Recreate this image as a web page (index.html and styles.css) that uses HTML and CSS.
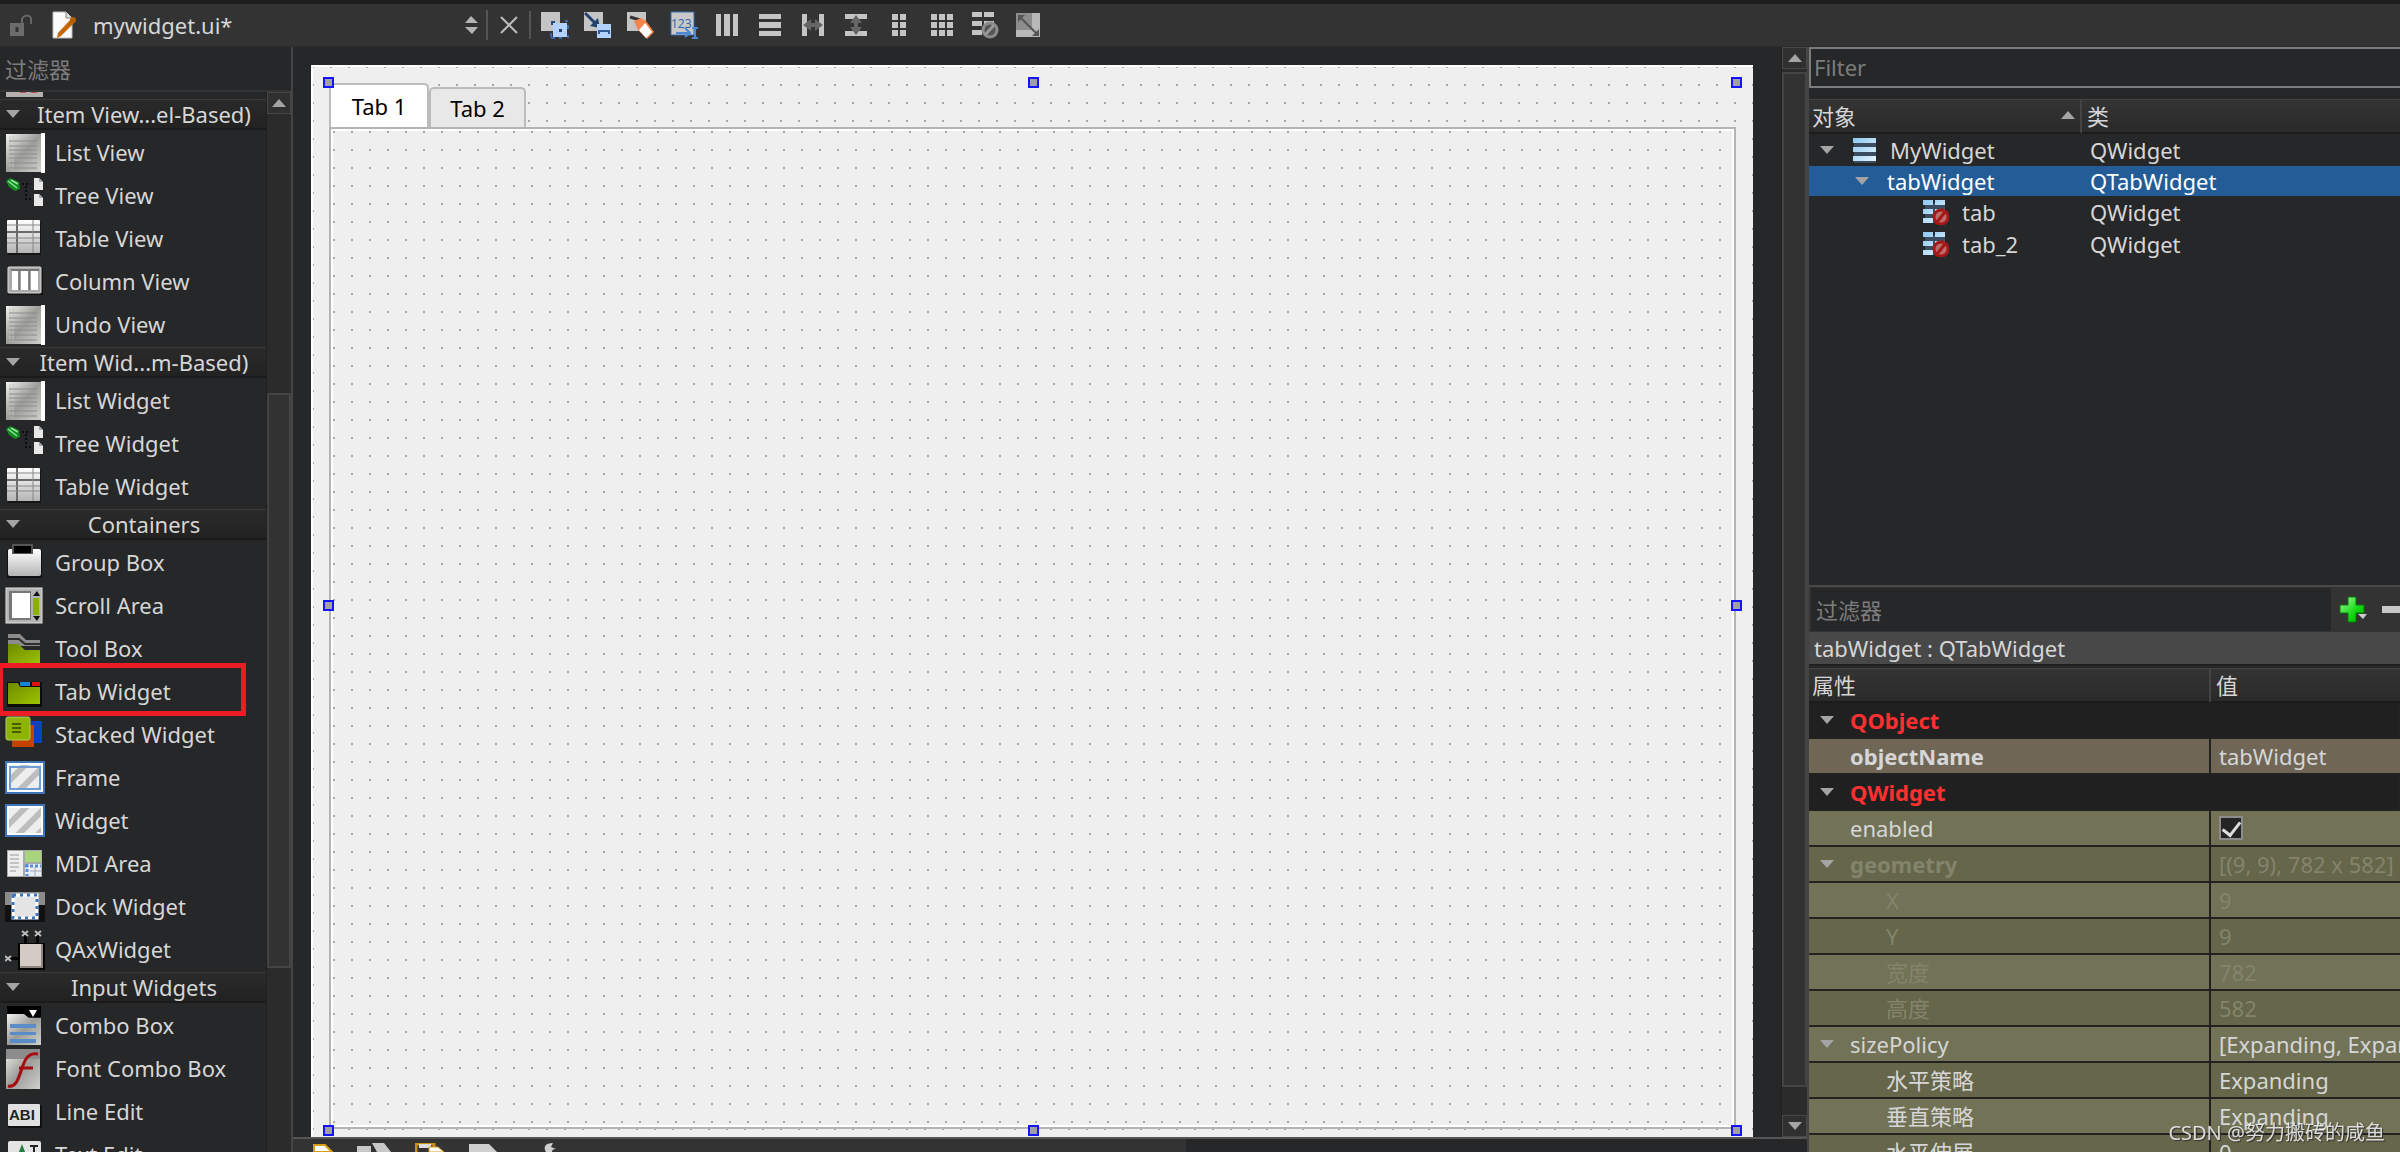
FILE: index.html
```
<!DOCTYPE html>
<html lang="zh-CN">
<head>
	<meta charset="utf-8">
	<title>mywidget.ui - Designer</title>
	<link rel="stylesheet" href="styles.css">
</head>

<body>
	<!-- icons used more than once -->
	<svg class="defs" aria-hidden="true">
		<defs>
			<linearGradient id="silver" x1="0" y1="0" x2="1" y2="1">
				<stop offset="0" stop-color="#f2f2f0"/>
				<stop offset=".5" stop-color="#9c9c98"/>
				<stop offset="1" stop-color="#d0d0cc"/>
			</linearGradient>
			<linearGradient id="paper" x1="0" y1="0" x2="0" y2="1">
				<stop offset="0" stop-color="#fff"/>
				<stop offset="1" stop-color="#b4b4b4"/>
			</linearGradient>
			<linearGradient id="lime" x1="0" y1="0" x2="1" y2="1">
				<stop offset="0" stop-color="#6f8a00"/>
				<stop offset="1" stop-color="#9cc400"/>
			</linearGradient>
			<linearGradient id="ice" x1="0" y1="0" x2="1" y2="1">
				<stop offset="0" stop-color="#8cc8f0"/>
				<stop offset="1" stop-color="#e4f4ff"/>
			</linearGradient>
			<linearGradient id="plus" x1="0" y1="0" x2="1" y2="1">
				<stop offset="0" stop-color="#a8f8a0"/>
				<stop offset=".6" stop-color="#10d810"/>
				<stop offset="1" stop-color="#00b000"/>
			</linearGradient>
			<pattern id="stripes" width="14" height="14" patternUnits="userSpaceOnUse" patternTransform="rotate(45)">
				<rect width="14" height="14" fill="#eee"/>
				<rect width="6" height="14" fill="#bdbdbd"/>
			</pattern>
		</defs>
		<symbol id="i-list" viewBox="0 0 40 40">
			<rect x="1" y="1" width="35" height="38" fill="url(#silver)"/>
			<path d="M5 3v34M8 3v34" stroke="#c8c8c4"/>
			<path d="M4 8h28M4 13h28M4 17h28M4 21h28M4 25h28M4 30h28M4 35h28" stroke="#8c8c88"/>
			<rect x="36" width="4" height="40" fill="#fff"/>
		</symbol>
		<symbol id="i-tree" viewBox="0 0 40 40">
			<path d="M1 5l4-3 9 4 1 7-5 2-6-4z" fill="#158a22"/>
			<path d="M3 5l9 7M6 4l7 4" stroke="#8fe69a" stroke-width="1.5" fill="none"/>
			<path d="M17 8h9M21 10v13h6" stroke="#0c0c0c" stroke-width="2" stroke-dasharray="2 2" fill="none"/>
			<path d="M29 2h5l4 4v8h-9zM29 18h5l4 4v8h-9z" fill="#e8e8e8"/>
			<path d="M34 2v4h4zM34 18v4h4z" fill="#aaa"/>
		</symbol>
		<symbol id="i-table" viewBox="0 0 40 40">
			<rect x="3" y="3" width="33" height="33" rx="1" fill="#151515"/>
			<rect x="2" y="1" width="33" height="33" rx="1" fill="url(#paper)"/>
			<path d="M2 13h33M12 1v33" stroke="#6a6a6a" stroke-width="2"/>
			<path d="M2 6h33M2 19h33M2 24h33M28 1v33" stroke="#888"/>
		</symbol>
		<symbol id="i-column" viewBox="0 0 40 40">
			<rect x="3" y="6" width="35" height="27" fill="#111"/>
			<rect x="3" y="5" width="33" height="26" rx="1" fill="#aaa" stroke="#ddd"/>
			<path d="M7 9h7v19H7zM16 9h8v19h-8zM26 9h7v19h-7z" fill="#fff"/>
			<path d="M14 9v19M24 9v19M6 8h28" stroke="#666" stroke-width="1.5"/>
		</symbol>
		<symbol id="i-layout" viewBox="0 0 26 26">
			<path d="M2 4h20v20H2z" fill="#3c4c62"/>
			<path d="M0 1h10v5H0zM12 1h10v5H12zM0 10h10v5H0zM12 10h10v5H12zM0 19h10v5H0z" fill="url(#ice)"/>
			<circle cx="18" cy="18" r="7" fill="#b86c6c" stroke="#a81818" stroke-width="3"/>
			<path d="M14 23l8-10" stroke="#a81818" stroke-width="3"/>
		</symbol>
		<symbol id="i-stripes" viewBox="0 0 40 34">
			<rect x="1" y="1" width="38" height="31" fill="#fff" stroke="#3f74b8" stroke-width="2"/>
			<rect x="4" y="4" width="32" height="25" fill="url(#stripes)"/>
		</symbol>
		<symbol id="i-down" viewBox="0 0 14 8"><path d="M0 0h14L7 8z" fill="#a4a4a4"/></symbol>
		<symbol id="i-up" viewBox="0 0 14 8"><path d="M0 8h14L7 0z" fill="#a4a4a4"/></symbol>
	</svg>

	<header class="toolbar">
		<button class="lock" title="Lock"><svg width="24" height="26" viewBox="0 0 24 26">
			<path d="M13 11V7a5 5 0 0 1 9-1v6" fill="none" stroke="#666" stroke-width="2"/>
			<rect x="1" y="11" width="14" height="13" fill="#6c6c6c"/>
			<path d="M8 15v5" stroke="#333" stroke-width="3"/></svg></button>
		<label class="file" for="file"><svg width="26" height="28" viewBox="0 0 26 28">
			<path d="M1 1h13l6 6v20H1z" fill="#fafafa" stroke="#bbb"/>
			<path d="M14 1v6h6" fill="#ddd" stroke="#888"/>
			<path d="M5 27l1-5L19 8l4 3L9 25z" fill="#c4660a"/>
			<circle cx="21" cy="9" r="3" fill="#b85c00"/></svg></label>
		<div class="file-picker">
			<select id="file" class="file-select"><option>mywidget.ui*</option></select>
			<svg class="spin" width="13" height="18" viewBox="0 0 13 18"><path d="M0 7h13L6 0zM0 11h13l-6 7z" fill="#b4b4b4"/></svg>
		</div>
		<button class="close" title="Close"><svg width="18" height="18" viewBox="0 0 18 18"><path d="M1 1l16 16M17 1L1 17" stroke="#bcbcbc" stroke-width="2"/></svg></button>
		<div class="tools">
			<button title="Edit Widgets"><svg width="28" height="28" viewBox="0 0 28 28"><path d="M0 1h19v19H0z" fill="#c4c4c4"/><path d="M10 10h4v4h-4z" fill="#274a78"/><path d="M10 26v-4M10 27h4M18 27h3M27 27v-3M27 10h-3M27 14v4" stroke="#3a68b0" stroke-width="2"/><path d="M12 12h14v14H12z" fill="#b4d2ff"/><path d="M18 18h3v3h-3z" fill="#24406c"/></svg></button>
			<button title="Edit Signals/Slots"><svg width="28" height="28" viewBox="0 0 28 28"><path d="M0 1h19v19H0z" fill="#c4c4c4"/><path d="M1 2l11 11" stroke="#24406c" stroke-width="3"/><path d="M16 17l-10-2 8-8z" fill="#24406c"/><path d="M13 13h14v14H13z" fill="#b4d2ff"/><path d="M15 20h10M15 23v-4M25 23v-4" stroke="#355e98" stroke-width="2"/></svg></button>
			<button title="Edit Buddies"><svg width="28" height="28" viewBox="0 0 28 28"><path d="M0 1h19v19H0z" fill="#c4c4c4"/><path d="M3 6l10 3" stroke="#333" stroke-width="3"/><path d="M7 10l7-3 5 3 8 11-7 7-9-9z" fill="#f5844c"/><path d="M12 19l6-7 7 9-6 6z" fill="#fff"/></svg></button>
			<button title="Edit Tab Order"><svg width="28" height="28" viewBox="0 0 28 28"><path d="M1 1h23v23H1z" fill="#c8c8c8" stroke="#386cb0"/><text class="tab-order" x="1" y="17">123</text><path d="M6 22h14M15 17l5 5-5 4M25 17v10M28 17h-6M28 27h-6" stroke="#4a88d8" stroke-width="2" fill="none"/></svg></button>
			<button title="Lay Out Horizontally"><svg width="24" height="24" viewBox="0 0 24 24"><path d="M1 1h5v22H1zM9 1h6v22H9zM18 1h5v22h-5z" fill="#c4c4c4"/></svg></button>
			<button title="Lay Out Vertically"><svg width="24" height="24" viewBox="0 0 24 24"><path d="M1 1h22v5H1zM1 9h22v6H1zM1 18h22v5H1z" fill="#c4c4c4"/></svg></button>
			<button title="Lay Out Horizontally in Splitter"><svg width="24" height="24" viewBox="0 0 24 24"><path d="M1 1h5v22H1zM18 1h5v22h-5z" fill="#c4c4c4"/><path d="M6 12h12" stroke="#666" stroke-width="4"/><path d="M2 12l8-6v12zM22 12l-8-6v12z" fill="#666"/></svg></button>
			<button title="Lay Out Vertically in Splitter"><svg width="24" height="24" viewBox="0 0 24 24"><path d="M1 1h22v5H1zM1 18h22v5H1z" fill="#c4c4c4"/><path d="M12 6v12" stroke="#666" stroke-width="4"/><path d="M12 2l-6 8h12zM12 22l-6-8h12z" fill="#666"/></svg></button>
			<button title="Lay Out in a Form"><svg width="24" height="24" viewBox="0 0 24 24"><path d="M5 1h6v6H5zM13 1h6v6h-6zM5 9h6v6H5zM13 9h6v6h-6zM5 17h6v6H5zM13 17h6v6h-6z" fill="#c4c4c4"/></svg></button>
			<button title="Lay Out in a Grid"><svg width="24" height="24" viewBox="0 0 24 24"><path d="M1 1h6v6H1zM9 1h6v6H9zM17 1h6v6h-6zM1 9h6v6H1zM9 9h6v6H9zM17 9h6v6h-6zM1 17h6v6H1zM9 17h6v6H9zM17 17h6v6h-6z" fill="#c4c4c4"/></svg></button>
			<button title="Break Layout"><svg width="28" height="28" viewBox="0 0 28 28"><path d="M1 1h10v5H1zM13 1h10v5H13zM1 10h10v5H1zM13 10h10v5H13zM1 19h10v5H1z" fill="#c4c4c4"/><circle cx="19" cy="19" r="7" fill="#555" stroke="#8c8c8c" stroke-width="3"/><path d="M14 24l9-10" stroke="#999" stroke-width="3"/></svg></button>
			<button title="Adjust Size"><svg width="26" height="26" viewBox="0 0 26 26"><path d="M1 1h24v24H1z" fill="#b8b8b8"/><path d="M1 1h16v17H1z" fill="#8c8c8c"/><path d="M6 6l15 15" stroke="#555" stroke-width="2"/><path d="M3 3h7l-7 7zM24 24h-7l7-7z" fill="#555"/></svg></button>
		</div>
	</header>

	<main class="workspace">
		<aside class="widget-box">
			<input class="filter" type="text" placeholder="过滤器" aria-label="过滤器">
			<div class="box-body">
				<div class="box-list">
					<svg class="cut-icon" width="40" height="7" viewBox="0 0 40 7"><path d="M1 0h37v5H1z" fill="#b4b0b0"/><path d="M15 0h6v1h-6zM26 0h6v1h-6z" fill="#c05060"/></svg>

					<button class="category"><svg><use href="#i-down"/></svg><span>Item View...el-Based)</span></button>
					<ul>
						<li><svg><use href="#i-list"/></svg>List View</li>
						<li><svg><use href="#i-tree"/></svg>Tree View</li>
						<li><svg><use href="#i-table"/></svg>Table View</li>
						<li><svg><use href="#i-column"/></svg>Column View</li>
						<li><svg><use href="#i-list"/></svg>Undo View</li>
					</ul>

					<button class="category"><svg><use href="#i-down"/></svg><span>Item Wid...m-Based)</span></button>
					<ul>
						<li><svg><use href="#i-list"/></svg>List Widget</li>
						<li><svg><use href="#i-tree"/></svg>Tree Widget</li>
						<li><svg><use href="#i-table"/></svg>Table Widget</li>
					</ul>

					<button class="category"><svg><use href="#i-down"/></svg><span>Containers</span></button>
					<ul>
						<li><svg viewBox="0 0 40 40"><path d="M2 7h35v28H2z" fill="#111"/><rect x="3" y="6" width="33" height="27" rx="2" fill="url(#paper)"/><path d="M7 1h21v10H7z" fill="#555"/><path d="M9 3h17v7H9z" fill="#000"/></svg>Group Box</li>
						<li><svg viewBox="0 0 40 40"><rect x="1" y="2" width="36" height="35" fill="#b4b4b4" stroke="#e4e4e4"/><path d="M4 5h22v29H4z" fill="#777"/><path d="M7 7h18v25H7z" fill="#fff"/><path d="M28 12h6v17h-6z" fill="#8cb000"/><path d="M28 10h7l-3-5zM28 30h7l-3 5z" fill="#111"/></svg>Scroll Area</li>
						<li><svg viewBox="0 0 40 40"><path d="M3 5h12l6 6h14v6H3z" fill="#8c8c8c"/><path d="M3 10h11l6 5h15" stroke="#2c2c2c" stroke-width="2" fill="none"/><path d="M3 15h10l7 6h15v15H3z" fill="url(#lime)"/></svg>Tool Box</li>
						<li class="marked"><svg viewBox="0 0 40 40"><path d="M2 10h35v25H2z" fill="#0c0c0c"/><path d="M3 11h10l2 4h20v17H3z" fill="url(#lime)"/><path d="M15 10h10v4H15z" fill="#1484d8"/><path d="M27 10h8v4h-8z" fill="#e01010"/></svg>Tab Widget</li>
						<li><svg viewBox="0 0 40 40"><path d="M26 6h11v22H26z" fill="#0a40c4"/><path d="M7 10h22v22H7z" fill="#c44200"/><rect x="1" y="2" width="24" height="23" rx="2" fill="#8cb400" stroke="#b4c86c"/><path d="M7 9h9M7 13h9M7 17h9" stroke="#446000" stroke-width="2"/></svg>Stacked Widget</li>
						<li><svg><use href="#i-stripes"/><rect x="5" y="9" width="30" height="22" fill="none" stroke="#6f9cd4" stroke-width="2"/></svg>Frame</li>
						<li><svg><use href="#i-stripes"/></svg>Widget</li>
						<li><svg viewBox="0 0 40 40"><path d="M2 6h35v27H2z" fill="#aaa"/><path d="M3 7h15v25H3z" fill="#eee"/><path d="M5 11h9M5 15h9M5 19h9M5 23h9M5 27h6" stroke="#999"/><path d="M20 7h16v11H20z" fill="#a8d47c"/><path d="M20 20h16v12H20z" fill="#e8eef8"/><path d="M20 22h16M22 20v12" stroke="#5a8cd8" stroke-width="3" stroke-dasharray="3 2"/><path d="M25 27h11M30 23v9" stroke="#aaa"/></svg>MDI Area</li>
						<li><svg viewBox="0 0 40 40"><path d="M0 5h40v13H0z" fill="#8c8c8c"/><path d="M0 18h40v17H0z" fill="#111"/><rect x="8" y="8" width="24" height="23" fill="#e4e4e4" stroke="#fff" stroke-width="3"/><rect x="8" y="8" width="24" height="23" fill="none" stroke="#3c74b8" stroke-width="3" stroke-dasharray="3 4"/></svg>Dock Widget</li>
						<li><svg viewBox="0 0 40 40"><path d="M13 13h27v27H13zM19 4h3v9h-3zM31 4h3v9h-3zM4 27h10v3H4z" fill="#050505"/><path d="M15 14h22v23H15z" fill="#d4ccc4"/><path d="M37 14v23H15" stroke="#8c8880" stroke-width="2" fill="none"/><path d="M17 1l6 5M23 1l-6 5M30 1l6 5M36 1l-6 5M0 26l6 5M6 26l-6 5" stroke="#bbb" stroke-width="2"/></svg>QAxWidget</li>
					</ul>

					<button class="category"><svg><use href="#i-down"/></svg><span>Input Widgets</span></button>
					<ul>
						<li><svg viewBox="0 0 40 40"><path d="M2 0h34v11H2z" fill="#000"/><path d="M2 8h17l5 4h12v27H2z" fill="url(#silver)"/><path d="M24 4h8l-4 7z" fill="#fff"/><path d="M5 18h26v4H5zM5 26h26v3H5zM5 33h26v4H5z" fill="#5c8cc8"/></svg>Combo Box</li>
						<li><svg viewBox="0 0 40 40"><path d="M1 0h34v40H1z" fill="url(#silver)"/><path d="M1 0h34v10H1z" fill="#8c8c8c"/><path d="M3 37c11 3 12-18 18-27 3-5 7-6 12-5M14 19h14" stroke="#a40c10" stroke-width="3" fill="none"/></svg>Font Combo Box</li>
						<li><svg viewBox="0 0 40 40"><rect x="3" y="13" width="34" height="23" fill="#111"/><rect x="3" y="12" width="32" height="22" rx="1" fill="#e0e0e0"/><text class="glyph" x="4" y="28">ABI</text></svg>Line Edit</li>
						<li><svg viewBox="0 0 40 40"><rect x="3" y="6" width="33" height="34" rx="2" fill="#e4e4e4"/><path d="M12 22l5-13 5 13z" fill="#208040"/><path d="M25 11h8M29 11v12" stroke="#222" stroke-width="2"/></svg>Text Edit</li>
					</ul>
				</div>
				<div class="scrollbar">
					<button class="step" title="Up"><svg><use href="#i-up"/></svg></button>
					<div class="track-head"></div>
					<div class="thumb"></div>
					<div class="track-tail"></div>
				</div>
			</div>
		</aside>

		<section class="center">
			<div class="canvas">
				<div class="form">
					<div class="tab-widget">
						<div class="tabs" role="tablist">
							<button class="tab active" role="tab">Tab 1</button>
							<button class="tab" role="tab">Tab 2</button>
						</div>
						<div class="page"></div>
						<i class="handle n w"></i><i class="handle n c"></i><i class="handle n e"></i>
						<i class="handle m w"></i><i class="handle m e"></i>
						<i class="handle s w"></i><i class="handle s c"></i><i class="handle s e"></i>
					</div>
				</div>
				<div class="scrollbar">
					<button class="step" title="Up"><svg><use href="#i-up"/></svg></button>
					<div class="thumb"></div>
					<div class="track-end"></div>
					<button class="step" title="Down"><svg><use href="#i-down"/></svg></button>
				</div>
			</div>
			<div class="action-bar">
				<div class="actions">
					<button title="New"><svg width="20" height="9" viewBox="0 0 20 9"><path d="M1 2h11l7 7H1z" fill="#fff" stroke="#d89c18" stroke-width="2"/></svg></button>
					<button title="Copy"><svg width="34" height="9" viewBox="0 0 34 9"><path d="M0 3h14v6H0zM15 0h12l7 9H20z" fill="#c8c8c8"/></svg></button>
					<button title="Paste"><svg width="30" height="9" viewBox="0 0 30 9"><path d="M1 9V1h18v4" fill="none" stroke="#c89018" stroke-width="3"/><path d="M4 1h12v4H4z" fill="#ddd"/><path d="M14 9V4h9l6 5z" fill="#fff" stroke="#d89c18"/></svg></button>
					<button title="Delete"><svg width="28" height="9" viewBox="0 0 28 9"><path d="M0 1h20l8 8H0z" fill="#d0d0d0"/></svg></button>
					<button title="Configure"><svg width="14" height="9" viewBox="0 0 14 9"><path d="M10 0C2 0 0 4 3 9h6c0-2 1-3 4-3L8 4z" fill="#d0d0d0"/></svg></button>
				</div>
			</div>
		</section>

		<aside class="inspector">
			<section class="objects">
				<input class="object-filter" type="text" placeholder="Filter" aria-label="Filter">
				<table class="tree">
					<thead>
						<tr><th class="name">对象<svg class="sort"><use href="#i-up"/></svg></th><th>类</th></tr>
					</thead>
					<tbody>
						<tr><td><div class="cell"><svg class="arrow"><use href="#i-down"/></svg><svg class="icon" viewBox="0 0 26 26"><path d="M1 4h22v22H1z" fill="#3c4c62"/><path d="M0 1h23v5H0zM0 10h23v5H0zM0 19h23v5H0z" fill="url(#ice)"/></svg>MyWidget</div></td><td>QWidget</td></tr>
						<tr class="selected"><td><div class="cell level-1"><svg class="arrow"><use href="#i-down"/></svg>tabWidget</div></td><td>QTabWidget</td></tr>
						<tr><td><div class="cell level-2"><svg class="icon"><use href="#i-layout"/></svg>tab</div></td><td>QWidget</td></tr>
						<tr><td><div class="cell level-2"><svg class="icon"><use href="#i-layout"/></svg>tab_2</div></td><td>QWidget</td></tr>
					</tbody>
				</table>
			</section>

			<section class="properties">
				<div class="property-bar">
					<input class="filter" type="text" placeholder="过滤器" aria-label="过滤器">
					<button title="Add"><svg width="28" height="28" viewBox="0 0 28 28"><path d="M9 1h8v8h8v8h-8v9H9v-9H1V9h8z" fill="url(#plus)" stroke="#087808"/><path d="M19 18h9l-4 5z" fill="#ccc"/></svg></button>
					<button title="Remove"><svg width="28" height="28" viewBox="0 0 28 28"><path d="M1 10h26v7H1z" fill="#c8c8c8"/></svg></button>
				</div>
				<div class="object-label">tabWidget : QTabWidget</div>
				<table class="props">
					<thead>
						<tr><th class="name">属性</th><th>值</th></tr>
					</thead>
					<tbody>
						<tr class="group"><td colspan="2"><div class="cell"><svg class="arrow"><use href="#i-down"/></svg>QObject</div></td></tr>
						<tr class="brown"><td><div class="cell"><b>objectName</b></div></td><td>tabWidget</td></tr>
						<tr class="group"><td colspan="2"><div class="cell"><svg class="arrow"><use href="#i-down"/></svg>QWidget</div></td></tr>
						<tr class="light"><td><div class="cell"><label for="enabled">enabled</label></div></td><td><input id="enabled" class="check" type="checkbox" checked></td></tr>
						<tr class="dark off"><td><div class="cell"><svg class="arrow"><use href="#i-down"/></svg><b>geometry</b></div></td><td>[(9, 9), 782 x 582]</td></tr>
						<tr class="light off"><td><div class="cell sub">X</div></td><td>9</td></tr>
						<tr class="dark off"><td><div class="cell sub">Y</div></td><td>9</td></tr>
						<tr class="light off"><td><div class="cell sub">宽度</div></td><td>782</td></tr>
						<tr class="dark off"><td><div class="cell sub">高度</div></td><td>582</td></tr>
						<tr class="light"><td><div class="cell"><svg class="arrow"><use href="#i-down"/></svg>sizePolicy</div></td><td>[Expanding, Expanding, 0, 0]</td></tr>
						<tr class="dark"><td><div class="cell sub">水平策略</div></td><td>Expanding</td></tr>
						<tr class="light"><td><div class="cell sub">垂直策略</div></td><td>Expanding</td></tr>
						<tr class="dark"><td><div class="cell sub">水平伸展</div></td><td>0</td></tr>
					</tbody>
				</table>
			</section>
		</aside>
	</main>
	<div class="watermark">CSDN @努力搬砖的咸鱼</div>
</body>

</html>
```
FILE: styles.css
```
* {
	box-sizing: border-box;
}

body {
	margin: 0;
	height: 100vh;
	display: flex;
	flex-direction: column;
	overflow: hidden;
	background: #262729;
	color: #d6d6d6;
	font: 22px/30px "Noto Sans", "Noto Sans CJK SC", sans-serif;
}

button, input, select {
	font: inherit;
	color: inherit;
	margin: 0;
	padding: 0;
	border: 0;
	border-radius: 0;
	background: none;
}

input {
	outline: none;
}

input::placeholder {
	color: #7c7c7c;
	opacity: 1;
}

ul {
	margin: 0;
	padding: 0 0 2px;
	list-style: none;
}

svg {
	display: block;
	flex: none;
}

.defs {
	position: absolute;
	width: 0;
	height: 0;
}

/* toolbar */
.toolbar {
	flex: none;
	height: 47px;
	display: flex;
	align-items: center;
	background: #333;
	border-top: 4px solid #1e1e1e;
	border-bottom: 1px solid #2c2c2c;
}

.lock {
	padding-left: 9px;
}

.file {
	padding-left: 19px;
}

.file-picker {
	display: flex;
	align-items: center;
	width: 410px;
	padding: 0 8px 0 15px;
	border-right: 2px solid #555;
}

.file-select {
	flex: 1;
	appearance: none;
	outline: none;
}

.close {
	width: 43px;
	height: 28px;
	padding-left: 12px;
	border-right: 2px solid #555;
}

.tools {
	display: flex;
	padding-left: 2px;
}

.tools button {
	width: 43px;
	display: flex;
	align-items: center;
	justify-content: center;
}

.tab-order {
	font: 12px "Open Sans", sans-serif;
	fill: #2464b4;
}

.glyph {
	font: bold 15px "Liberation Sans", sans-serif;
	fill: #222;
}

.workspace {
	flex: 1;
	min-height: 0;
	display: flex;
}

/* widget box */
.widget-box {
	width: 293px;
	flex: none;
	display: flex;
	flex-direction: column;
	border-right: 2px solid #444;
}

.filter {
	height: 43px;
	padding-left: 5px;
	background: #262729;
}

.box-body {
	flex: 1;
	min-height: 0;
	display: flex;
	border-top: 2px solid #333;
}

.box-list {
	flex: 1;
	overflow: hidden;
}

.cut-icon {
	margin-left: 5px;
}

.category {
	display: flex;
	align-items: center;
	width: 100%;
	height: 31px;
	background: linear-gradient(#2a2a2a, #222);
	border-top: 1px solid #3a3a3a;
	border-bottom: 2px solid #1a1a1a;
}

.category svg {
	width: 14px;
	height: 8px;
	margin-left: 6px;
}

.category span {
	flex: 1;
	padding-left: 2px;
}

.box-list li {
	position: relative;
	display: flex;
	align-items: center;
	gap: 10px;
	height: 43px;
	padding-left: 5px;
	white-space: nowrap;
}

.box-list li svg {
	width: 40px;
	height: 40px;
	margin-top: 3px;
}

.marked::after {
	content: "";
	position: absolute;
	inset: -6px 20px -4px -2px;
	border: 5px solid #ec1c24;
}

.scrollbar {
	width: 24px;
	flex: none;
	display: flex;
	flex-direction: column;
	background: #2b2b2b;
	border-left: 1px solid #202020;
}

.widget-box .scrollbar {
	width: 25px;
}

.step {
	flex: none;
	height: 22px;
	display: flex;
	align-items: center;
	justify-content: center;
	background: #303030;
	border: 1px solid #484848;
}

.step svg {
	width: 14px;
	height: 8px;
}

.thumb {
	flex: 574;
	background: #323232;
	border: 2px solid #444;
}

.track-head {
	flex: 280;
}

.track-tail {
	flex: 185;
}

/* form editor */
.center {
	flex: 1;
	min-width: 0;
	display: flex;
	flex-direction: column;
}

.canvas {
	flex: 1;
	min-height: 0;
	display: flex;
}

.canvas .scrollbar {
	width: 26px;
}

.form {
	flex: 1;
	display: flex;
	margin: 18px 28px 0 18px;
	padding: 16px 17px 8px 16px;
	border: solid #fff;
	border-width: 2px 0 0 2px;
	background: radial-gradient(circle at 1px 1px, #a8a8a8 1px, transparent 1px) -1px -1px / 18px 18px #efefef;
}

.tab-widget {
	flex: 1;
	display: flex;
	flex-direction: column;
	position: relative;
}

.tabs {
	display: flex;
	align-items: flex-end;
	height: 44px;
}

.tab {
	width: 97px;
	height: 40px;
	color: #000;
	background: #e8e8e8;
	border: 2px solid #bcbcbc;
	border-bottom: 0;
	border-radius: 5px 5px 0 0;
}

.tab.active {
	width: 100px;
	height: 44px;
	background: #fff;
}

.page {
	flex: 1;
	border: 2px solid #b4b4b4;
	box-shadow: inset 0 0 0 2px #fff;
	background: radial-gradient(circle at 1px 1px, #a8a8a8 1px, transparent 1px) 2px 2px / 18px 18px #efefef;
}

.handle {
	position: absolute;
	width: 11px;
	height: 11px;
	background: #a0a0a0;
	border: 2px solid #1414ff;
}

.n { top: -6px; }
.m { top: calc(50% - 6px); }
.s { bottom: -7px; }
.w { left: -6px; }
.c { left: calc(50% - 5px); }
.e { right: -6px; }

.canvas .thumb {
	flex: 1;
	margin-top: 3px;
}

.canvas .track-end {
	height: 28px;
}

.action-bar {
	flex: none;
	height: 15px;
	border-top: 2px solid #555;
	overflow: hidden;
}

.actions {
	display: flex;
	gap: 24px;
	width: 59%;
	padding: 4px 0 0 20px;
	background: #333;
}

.actions button:nth-child(4) {
	margin-right: 22px;
}

/* object tree and properties */
.inspector {
	width: 593px;
	flex: none;
	display: flex;
	flex-direction: column;
	border-left: 2px solid #444;
	overflow: hidden;
}

.objects {
	height: 538px;
	display: flex;
	flex-direction: column;
	flex: none;
}

.object-filter {
	height: 41px;
	flex: none;
	padding: 0 0 2px 3px;
	margin-bottom: 11px;
	border: 2px solid #7c7c7c;
	border-right: 0;
}

table {
	width: 100%;
	border-collapse: separate;
	border-spacing: 0;
	table-layout: fixed;
}

th, td {
	padding: 0 0 0 8px;
	text-align: left;
	white-space: nowrap;
	overflow: hidden;
}

th {
	height: 35px;
	padding-left: 5px;
	font-weight: normal;
	background: linear-gradient(#343434, #2a2a2a);
	border-top: 1px solid #444;
	border-bottom: 2px solid #1c1c1c;
}

th.name {
	position: relative;
	padding-left: 3px;
	border-right: 2px solid #444;
}

.tree .name {
	width: 273px;
}

.props .name {
	width: 402px;
}

.sort {
	position: absolute;
	right: 5px;
	top: 11px;
	width: 14px;
	height: 8px;
}

.cell {
	display: flex;
	align-items: center;
}

td:first-child {
	padding-left: 0;
}

.arrow {
	width: 14px;
	height: 8px;
}

.tree td {
	height: 32px;
	padding-bottom: 1px;
}

.tree .selected td {
	height: 30px;
	padding-bottom: 0;
	line-height: 28px;
	background: #235c96;
	color: #fff;
}

.tree .cell {
	padding-left: 11px;
}

.tree .arrow {
	margin-right: 19px;
}

.tree .icon {
	width: 26px;
	height: 26px;
	margin-right: 11px;
}

.tree .level-1 {
	padding-left: 46px;
}

.tree .level-1 .arrow {
	margin-right: 18px;
}

.tree .level-2 {
	padding-left: 114px;
}

.tree .level-2 .icon {
	margin-right: 13px;
}

.properties {
	flex: 1;
	border-top: 2px solid #484848;
}

.property-bar {
	display: flex;
	align-items: center;
	gap: 14px;
	height: 45px;
	padding-left: 2px;
	background: #333;
	overflow: hidden;
}

.property-bar .filter {
	flex: none;
	width: 520px;
	margin-right: -6px;
}

.object-label {
	height: 33px;
	margin-bottom: 3px;
	padding: 1px 0 0 5px;
	background: #484848;
	border-bottom: 1px solid #1c1c1c;
}

.props td {
	height: 36px;
	border-bottom: 2px solid #222;
}

.props td:first-child {
	border-right: 2px solid #222;
}

.props .cell {
	padding-left: 41px;
}

.props .cell:has(.arrow) {
	padding-left: 11px;
}

.props .arrow {
	margin-right: 16px;
}

.props .sub {
	padding-left: 77px;
}

.group td {
	background: #202020;
	color: #ff3030;
	font-weight: bold;
}

.brown td {
	background: #706656;
}

.light td {
	background: #727256;
}

.dark td {
	background: #66664a;
}

.off td {
	color: #84846c;
}

.check {
	appearance: none;
	display: block;
	width: 24px;
	height: 24px;
	background: #242424;
	border: 2px solid #8c8c8c;
}

.check:checked::after {
	content: "";
	display: block;
	width: 8px;
	height: 15px;
	margin: 0 auto;
	border: solid #ddd;
	border-width: 0 3px 3px 0;
	transform: rotate(38deg);
}

.watermark {
	position: fixed;
	right: 15px;
	bottom: 6px;
	font-size: 20px;
	line-height: 26px;
	color: rgba(255, 255, 255, .8);
	text-shadow: 1px 1px 1px #333;
}
```
